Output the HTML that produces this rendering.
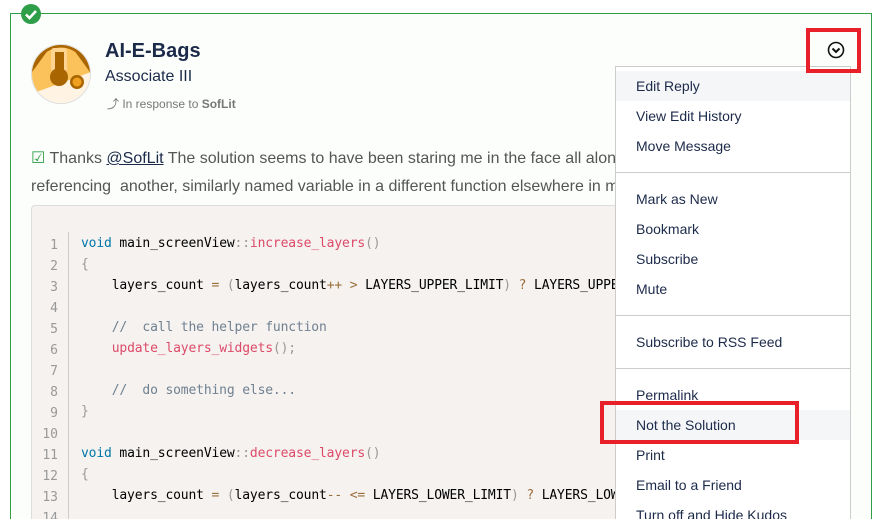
<!DOCTYPE html>
<html style="overflow:hidden"><head><style>
html,body{margin:0;width:876px;height:519px;overflow:hidden}
body{background:#fff;font-family:"Liberation Sans",sans-serif}
.wrap{position:relative;width:876px;height:519px;overflow:hidden}
.card{position:absolute;left:10px;top:13px;width:860px;height:520px;border:1px solid #2e9e48;background:#fcfefc}
.abs{position:absolute}
.code{position:absolute;left:31px;top:205px;width:640px;height:330px;background:#f5f2f0;border:1px solid #ddd;border-radius:4px}
.ln{position:absolute;left:40px;width:18px;text-align:right;font:13px "DejaVu Sans Mono",monospace;color:#999}
.cl{position:absolute;left:81px;font:13px "DejaVu Sans Mono",monospace;color:#000;white-space:pre;letter-spacing:-0.15px}
.kw{color:#07a}.fn{color:#dd4a68}.p{color:#999}.op{color:#9a6e3a}.cm{color:#708090}
.menu{position:absolute;left:615px;top:66px;width:234px;height:470px;background:#fff;border:1px solid #ccc}
.mi{position:absolute;left:20px;font-size:14px;color:#1c2a4a}
.sep{position:absolute;left:0;right:0;height:1px;background:#ccc}
.hl{position:absolute;left:0;right:0;height:30px;background:#f5f6f8}
.red{position:absolute;border:4px solid #e8202a}
</style></head><body><div class="wrap">
<div class="card"></div>
<svg class="abs" style="left:20px;top:3px" width="22" height="22"><circle cx="11" cy="11" r="10" fill="#2e9e48"/><path d="M6 11.5l3.5 3.5 6.5-7" stroke="#fff" stroke-width="2.6" fill="none"/></svg>
<svg class="abs" style="left:31px;top:44px" width="60" height="60"><defs><clipPath id="c"><circle cx="30" cy="30" r="29"/></clipPath></defs><circle cx="30" cy="30" r="29.5" fill="#fff" stroke="#ddd"/><g clip-path="url(#c)"><path d="M0 0h60v30L0 50z" fill="#fbc15a"/><path d="M0 50 L60 28 L60 60 L0 60z" fill="#fff4e4"/><path d="M-2 28 L14 6 Q30 -4 46 6 L62 28" stroke="#a86500" stroke-width="5" fill="none"/><rect x="20" y="4" width="16" height="24" rx="3" fill="#ffd390"/><rect x="24" y="8" width="9" height="20" fill="#a86500"/><circle cx="28" cy="33" r="9" fill="#a86500"/><circle cx="46" cy="38" r="7" fill="#a86500"/><circle cx="46" cy="38" r="4.5" fill="#f0a020"/></g></svg>
<div class="abs" style="left:105px;top:40px;font-size:20px;font-weight:bold;color:#1c2a4a">AI-E-Bags</div>
<div class="abs" style="left:105px;top:68px;font-size:16px;color:#1c2a4a">Associate III</div>
<div class="abs" style="left:107px;top:95px;font-size:12px;color:#777">⤴ In response to <b>SofLit</b></div>
<div class="abs" style="left:31px;top:145px;font-size:16px;color:#555;white-space:nowrap;line-height:28px"><span style="color:#2e9e48">☑</span> Thanks <span style="color:#1c2a4a;text-decoration:underline">@SofLit</span> The solution seems to have been staring me in the face all along<br>referencing&nbsp; another, similarly named variable in a different function elsewhere in my</div>
<div class="code"></div>
<div class="abs" style="left:68px;top:232px;width:1px;height:300px;background:#ccc"></div>
<div class="ln" style="top:238px">1</div><div class="ln" style="top:259px">2</div><div class="ln" style="top:280px">3</div><div class="ln" style="top:301px">4</div><div class="ln" style="top:322px">5</div><div class="ln" style="top:343px">6</div><div class="ln" style="top:364px">7</div><div class="ln" style="top:385px">8</div><div class="ln" style="top:406px">9</div><div class="ln" style="top:427px">10</div><div class="ln" style="top:448px">11</div><div class="ln" style="top:469px">12</div><div class="ln" style="top:490px">13</div><div class="ln" style="top:511px">14</div>
<div class="cl" style="top:236px"><span class="kw">void</span> main_screenView<span class="p">::</span><span class="fn">increase_layers</span><span class="p">()</span></div>
<div class="cl" style="top:257px"><span class="p">{</span></div>
<div class="cl" style="top:278px">    layers_count <span class="op">=</span> <span class="p">(</span>layers_count<span class="op">++</span> <span class="op">&gt;</span> LAYERS_UPPER_LIMIT<span class="p">)</span> <span class="op">?</span> LAYERS_UPPER_LIMIT</div>
<div class="cl" style="top:320px"><span class="cm">    //  call the helper function</span></div>
<div class="cl" style="top:341px">    <span class="fn">update_layers_widgets</span><span class="p">();</span></div>
<div class="cl" style="top:383px"><span class="cm">    //  do something else...</span></div>
<div class="cl" style="top:404px"><span class="p">}</span></div>
<div class="cl" style="top:446px"><span class="kw">void</span> main_screenView<span class="p">::</span><span class="fn">decrease_layers</span><span class="p">()</span></div>
<div class="cl" style="top:467px"><span class="p">{</span></div>
<div class="cl" style="top:488px">    layers_count <span class="op">=</span> <span class="p">(</span>layers_count<span class="op">--</span> <span class="op">&lt;=</span> LAYERS_LOWER_LIMIT<span class="p">)</span> <span class="op">?</span> LAYERS_LOWER</div>
<div class="menu">
<div class="hl" style="top:4px"></div>
<div class="mi" style="top:11px">Edit Reply</div>
<div class="mi" style="top:41px">View Edit History</div>
<div class="mi" style="top:71px">Move Message</div>
<div class="sep" style="top:105px"></div>
<div class="mi" style="top:124px">Mark as New</div>
<div class="mi" style="top:154px">Bookmark</div>
<div class="mi" style="top:184px">Subscribe</div>
<div class="mi" style="top:214px">Mute</div>
<div class="sep" style="top:248px"></div>
<div class="mi" style="top:267px">Subscribe to RSS Feed</div>
<div class="sep" style="top:301px"></div>
<div class="mi" style="top:320px">Permalink</div>
<div class="hl" style="top:343px"></div>
<div class="mi" style="top:350px">Not the Solution</div>
<div class="mi" style="top:380px">Print</div>
<div class="mi" style="top:410px">Email to a Friend</div>
<div class="mi" style="top:440px">Turn off and Hide Kudos</div>
</div>
<svg class="abs" style="left:826px;top:40px" width="20" height="20"><circle cx="10" cy="10" r="7.5" stroke="#111" stroke-width="1.6" fill="none"/><path d="M6.5 8.5l3.5 3.5 3.5-3.5" stroke="#111" stroke-width="2" fill="none"/></svg>
<div class="red" style="left:806px;top:28px;width:47px;height:37px"></div>
<div class="red" style="left:600px;top:401px;width:191px;height:35px"></div>
</div></body></html>
